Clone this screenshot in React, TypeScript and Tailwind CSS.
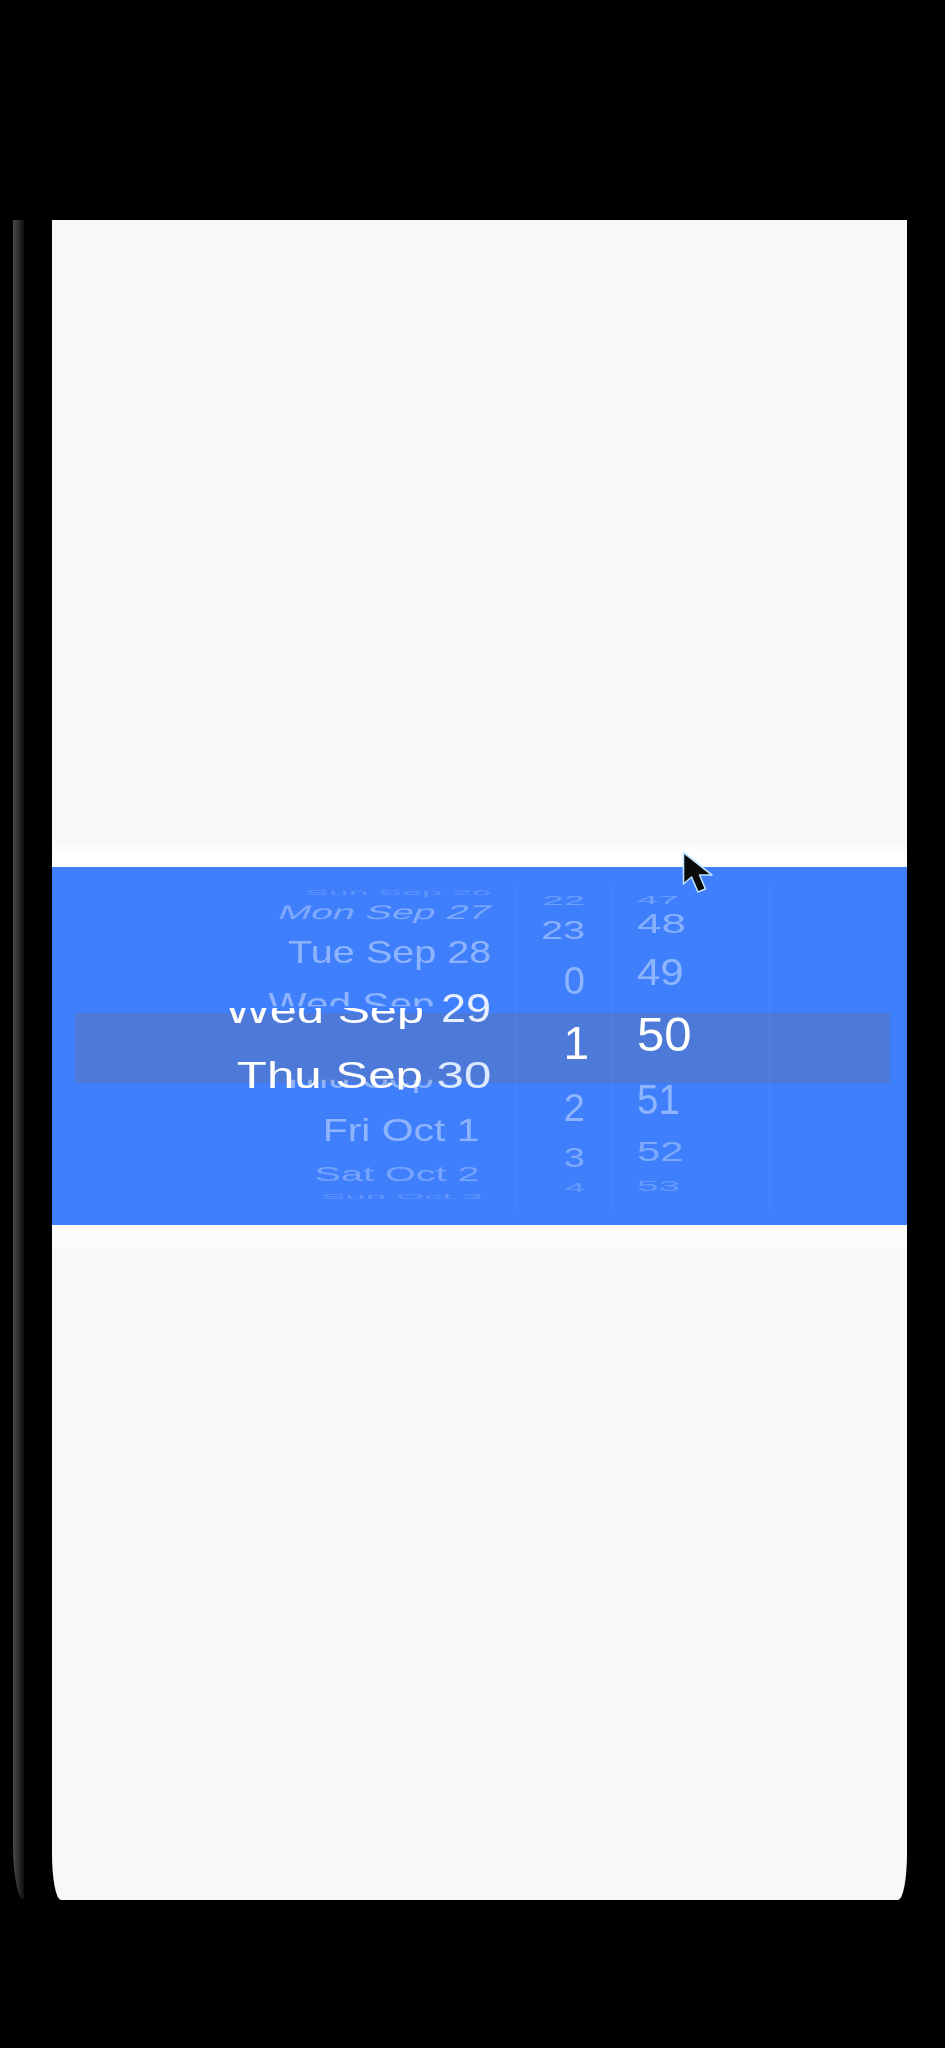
const dates = [
  { label: "Sun Sep 26", h: "h-[15px]", text: "scale-x-[1.08] scale-y-[0.2] opacity-20", mr: "mr-[0px]" },
  { label: "Mon Sep 27", h: "h-[25px]", text: "scale-x-[1.19] scale-y-[0.6] -skew-x-12 opacity-40", mr: "mr-[0px]" },
  { label: "Tue Sep 28", h: "h-[55px]", text: "scale-x-[1.2] scale-y-[0.95] opacity-50", mr: "mr-[0px]" },
];

const datesBelow = [
  { label: "Fri Oct 1", h: "h-[60px]", text: "scale-x-[1.24] scale-y-[0.95] opacity-50", mr: "mr-[11px]" },
  { label: "Sat Oct 2", h: "h-[28px]", text: "scale-x-[1.2] scale-y-[0.6] opacity-35", mr: "mr-[11px]" },
  { label: "Sun Oct 3", h: "h-[17px]", text: "scale-x-[1.1] scale-y-[0.2] opacity-20", mr: "mr-[8px]" },
];

const hours = [
  { label: "22", h: "h-[30px]", text: "text-[38px] scale-y-[0.35] opacity-30" },
  { label: "23", h: "h-[30px]", text: "text-[38px] scale-x-[1.05] scale-y-[0.66] opacity-45" },
  { label: "0", h: "h-[72px]", text: "text-[38px] scale-y-[1] opacity-50" },
  { label: "1", h: "h-[52px]", text: "relative left-[4px] text-[46px] text-white opacity-100" },
  { label: "2", h: "h-[78px]", text: "text-[38px] opacity-50" },
  { label: "3", h: "h-[22px]", text: "text-[38px] scale-y-[0.72] opacity-40" },
  { label: "4", h: "h-[38px]", text: "text-[36px] scale-y-[0.35] opacity-25" },
];

const minutes = [
  { label: "47", h: "h-[22px]", text: "scale-y-[0.28] scale-x-[0.9] opacity-30" },
  { label: "48", h: "h-[26px]", text: "scale-y-[0.66] scale-x-[1.05] opacity-45" },
  { label: "49", h: "h-[70px]", text: "scale-y-[0.9] opacity-50" },
  { label: "50", h: "h-[55px]", text: "text-[49px] text-white opacity-100" },
  { label: "51", h: "h-[75px]", text: "scale-y-[1] scale-x-[0.92] opacity-50" },
  { label: "52", h: "h-[30px]", text: "scale-y-[0.66] opacity-40" },
  { label: "53", h: "h-[38px]", text: "scale-y-[0.33] scale-x-[0.92] opacity-25" },
];

function Cursor() {
  return (
    <svg className="absolute left-[682px] top-[851px] z-20" width="34" height="46" viewBox="0 0 34 46">
      <path
        d="M1.5 1.5 L1.5 33 L9.5 26 L16 41 L23.5 38 L17.5 24 L30 24 Z"
        fill="#0a0a0a"
        stroke="#bfe3ff"
        strokeWidth="1.6"
        strokeLinejoin="round"
      />
    </svg>
  );
}

export default function App() {
  return (
    <div className="relative flex h-[2048px] w-[945px] items-start overflow-hidden bg-black pt-[220px] font-['Liberation_Sans',Arial,sans-serif]">
      {/* bezel reflection on the left edge */}
      <div className="ml-[13px] h-[1680px] w-[11px] rounded-bl-[12px_60px] bg-gradient-to-r from-[#4a4a4a] via-[#2e2e2e] to-[#0c0c0c]" />

      <div className="ml-[28px] flex h-[1680px] w-[855px] flex-col overflow-hidden rounded-b-[9px_46px] bg-[#f8f8f9]">
        <div className="h-[622px]" />
        <div className="h-[25px] bg-gradient-to-b from-[#f8f8f9] via-[#ffffff] to-[#ffffff]" />

        {/* picker */}
        <div className="relative h-[358px] bg-[#3f7ffc] blur-[0.7px]">
          <div className="absolute left-[23px] top-[146px] h-[70px] w-[815px] bg-[#4d7ad8]" />

          <div className="relative flex h-full pt-[18px] text-[#dce9ff]">
            <div className="flex h-[325px] w-[465px] flex-col items-end border-r border-white/5 pr-[25px]">
              {dates.map((d) => (
                <div key={d.label} className={`flex items-center ${d.h} ${d.mr}`}>
                  <span className={`origin-right text-[33px] leading-none whitespace-nowrap ${d.text}`}>{d.label}</span>
                </div>
              ))}

              {/* wed/thu caught mid frame, doubled */}
              <div className="relative h-[55px] w-full">
                <span className="absolute right-0 top-[8px] origin-right scale-x-[1.23] text-[33px] leading-none whitespace-nowrap opacity-50 [clip-path:inset(0_0_45%_0)]">
                  Wed Sep <span className="opacity-0">29</span>
                </span>
                <span className="absolute right-0 top-[13px] origin-right scale-x-[1.35] text-[36px] leading-none whitespace-nowrap text-white [clip-path:inset(42%_0_0_0)]">
                  Wed Sep <span className="opacity-0">29</span>
                </span>
                <span className="absolute right-0 top-[10px] origin-right scale-x-[1.25] scale-y-[1.15] text-[36px] leading-none whitespace-nowrap text-[#e8f0ff]">
                  29
                </span>
              </div>
              <div className="relative h-[65px] w-full">
                <span className="absolute right-0 top-[25px] origin-right scale-x-[1.23] text-[33px] leading-none whitespace-nowrap opacity-50 [clip-path:inset(60%_0_0_0)]">
                  Thu Sep <span className="opacity-0">30</span>
                </span>
                <span className="absolute right-0 top-[22px] origin-right scale-x-[1.33] text-[37px] leading-none whitespace-nowrap text-white [clip-path:inset(0_0_12%_0)]">
                  Thu Sep <span className="text-[#dce9ff]">30</span>
                </span>
              </div>

              {datesBelow.map((d) => (
                <div key={d.label} className={`flex items-center ${d.h} ${d.mr}`}>
                  <span className={`origin-right text-[33px] leading-none whitespace-nowrap ${d.text}`}>{d.label}</span>
                </div>
              ))}
            </div>

            <div className="flex h-[325px] w-[96px] flex-col items-end border-r border-white/5 pr-[27px]">
              {hours.map((h) => (
                <div key={h.label} className={`flex items-center ${h.h}`}>
                  <span className={`origin-right leading-none ${h.text}`}>{h.label}</span>
                </div>
              ))}
            </div>

            <div className="flex h-[325px] w-[157px] flex-col items-start border-r border-white/5 pl-[24px] pt-[4px] text-[42px]">
              {minutes.map((m) => (
                <div key={m.label} className={`flex items-center ${m.h}`}>
                  <span className={`origin-left leading-none ${m.text}`}>{m.label}</span>
                </div>
              ))}
            </div>
          </div>
        </div>

        <div className="h-[30px] bg-gradient-to-b from-[#ffffff] to-[#f8f8f9]" />
        <div className="flex-1" />
      </div>

      <Cursor />
    </div>
  );
}
